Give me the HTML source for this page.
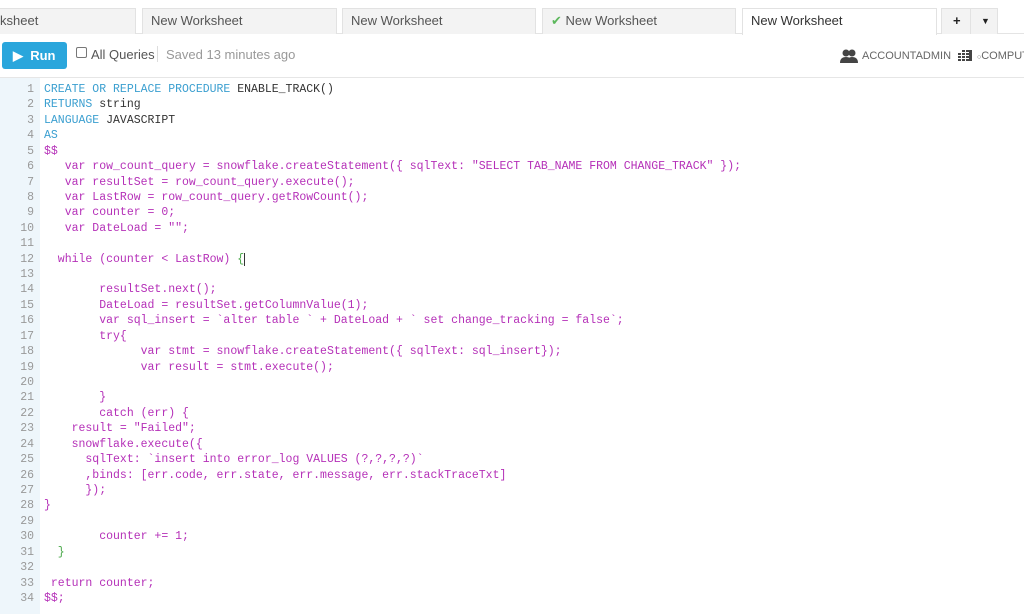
<!DOCTYPE html>
<html><head><meta charset="utf-8"><style>
*{margin:0;padding:0;box-sizing:border-box}
body{width:1024px;height:614px;overflow:hidden;background:#fff;font-family:"Liberation Sans",sans-serif;position:relative}
.tabbar{position:absolute;left:0;top:0;width:1024px;height:34px;background:#fff;border-bottom:1px solid #e4e4e4}
.tab{position:absolute;top:8px;height:26px;background:#f3f3f3;border:1px solid #e2e2e2;border-bottom:none;font-size:13px;color:#555;line-height:24px;padding-left:8px}
.tab.act{background:#fff;color:#333;height:27px}
.tb{position:absolute;top:41px;font-size:13px;color:#555}
.run{position:absolute;left:2px;top:42px;width:65px;height:27px;background:#2aa6dc;border-radius:3px;color:#fff;font-weight:bold;font-size:13px;line-height:27px;padding-left:11px}
.sep{position:absolute;left:0;top:77px;width:1024px;height:1px;background:#e6e6e6}
.gut{position:absolute;left:0;top:78px;width:40px;height:536px;background:#eef6fb}
.code{position:absolute;left:0;top:82px;font-family:"Liberation Mono",monospace;font-size:11.5px;line-height:15.42px;white-space:pre;color:#333}
.ln{display:inline-block;width:34px;text-align:right;color:#999;margin-right:10px}
.k{color:#3b9fd0}.m{color:#b530b8}.g{color:#4aa84a}
</style></head><body>
<div class="tabbar">
<div class="tab" style="left:-10px;width:146px;padding-left:9px">ksheet</div>
<div class="tab" style="left:142px;width:195px">New Worksheet</div>
<div class="tab" style="left:342px;width:194px">New Worksheet</div>
<div class="tab" style="left:542px;width:194px"><span style="color:#5cb85c">✔</span> New Worksheet</div>
<div class="tab act" style="left:742px;width:195px">New Worksheet</div>
<div class="tab" style="left:941px;width:30px;font-weight:bold;color:#222;padding-left:11px">+</div>
<div class="tab" style="left:970px;width:28px;font-size:9px;color:#222;padding-left:10px">▼</div>
</div>
<div class="run">▶&nbsp; Run</div>
<div class="tb" style="left:76px;top:47px;width:11px;height:11px;border:1px solid #777;border-radius:2px"></div>
<div class="tb" style="left:91px;top:47px">All Queries</div>
<div class="tb" style="left:157px;top:46px;width:1px;height:16px;background:#ddd"></div>
<div class="tb" style="left:166px;top:47px;color:#999">Saved 13 minutes ago</div>
<svg class="tb" style="left:840px;top:49px" width="18" height="14" viewBox="0 0 18 14"><circle cx="6" cy="4" r="3.5" fill="#444"/><circle cx="12" cy="4" r="3.5" fill="#444"/><path d="M0 14 Q0 8 6 8 Q12 8 12 14Z M7 14 Q7 8 12 8 Q18 8 18 14Z" fill="#444"/></svg>
<div class="tb" style="left:862px;top:50px;font-size:11px;color:#666">ACCOUNTADMIN</div>
<svg class="tb" style="left:958px;top:50px" width="14" height="12"><g fill="#444"><rect x="0" y="3" width="3" height="2"/><rect x="4" y="0" width="3" height="2"/><rect x="4" y="3" width="3" height="2"/><rect x="8" y="0" width="3" height="2"/><rect x="8" y="3" width="3" height="2"/><rect x="0" y="6" width="3" height="2"/><rect x="4" y="6" width="3" height="2"/><rect x="8" y="6" width="3" height="2"/><rect x="0" y="9" width="3" height="2"/><rect x="4" y="9" width="3" height="2"/><rect x="8" y="9" width="3" height="2"/><rect x="11" y="0" width="3" height="11"/></g></svg>
<div class="tb" style="left:977px;top:50px;font-size:11px;color:#666"><span style="font-size:7px">○</span>COMPUTE</div>
<div class="sep"></div>
<div class="gut"></div>
<div class="code"><span class="ln">1</span><span class="k">CREATE OR REPLACE PROCEDURE</span> ENABLE_TRACK()
<span class="ln">2</span><span class="k">RETURNS</span> string
<span class="ln">3</span><span class="k">LANGUAGE</span> JAVASCRIPT
<span class="ln">4</span><span class="k">AS</span>
<span class="ln">5</span><span class="m">$$</span>
<span class="ln">6</span><span class="m">   var row_count_query = snowflake.createStatement({ sqlText: "SELECT TAB_NAME FROM CHANGE_TRACK" });</span>
<span class="ln">7</span><span class="m">   var resultSet = row_count_query.execute();</span>
<span class="ln">8</span><span class="m">   var LastRow = row_count_query.getRowCount();</span>
<span class="ln">9</span><span class="m">   var counter = 0;</span>
<span class="ln">10</span><span class="m">   var DateLoad = "";</span>
<span class="ln">11</span>
<span class="ln">12</span><span class="m">  while (counter &lt; LastRow) </span><span class="g">{</span><span style="border-left:1px solid #333"></span>
<span class="ln">13</span>
<span class="ln">14</span><span class="m">        resultSet.next();</span>
<span class="ln">15</span><span class="m">        DateLoad = resultSet.getColumnValue(1);</span>
<span class="ln">16</span><span class="m">        var sql_insert = `alter table ` + DateLoad + ` set change_tracking = false`;</span>
<span class="ln">17</span><span class="m">        try{</span>
<span class="ln">18</span><span class="m">              var stmt = snowflake.createStatement({ sqlText: sql_insert});</span>
<span class="ln">19</span><span class="m">              var result = stmt.execute();</span>
<span class="ln">20</span>
<span class="ln">21</span><span class="m">        }</span>
<span class="ln">22</span><span class="m">        catch (err) {</span>
<span class="ln">23</span><span class="m">    result = "Failed";</span>
<span class="ln">24</span><span class="m">    snowflake.execute({</span>
<span class="ln">25</span><span class="m">      sqlText: `insert into error_log VALUES (?,?,?,?)`</span>
<span class="ln">26</span><span class="m">      ,binds: [err.code, err.state, err.message, err.stackTraceTxt]</span>
<span class="ln">27</span><span class="m">      });</span>
<span class="ln">28</span><span class="m">}</span>
<span class="ln">29</span>
<span class="ln">30</span><span class="m">        counter += 1;</span>
<span class="ln">31</span><span class="g">  }</span>
<span class="ln">32</span>
<span class="ln">33</span><span class="m"> return counter;</span>
<span class="ln">34</span><span class="m">$$;</span></div>
</body></html>
